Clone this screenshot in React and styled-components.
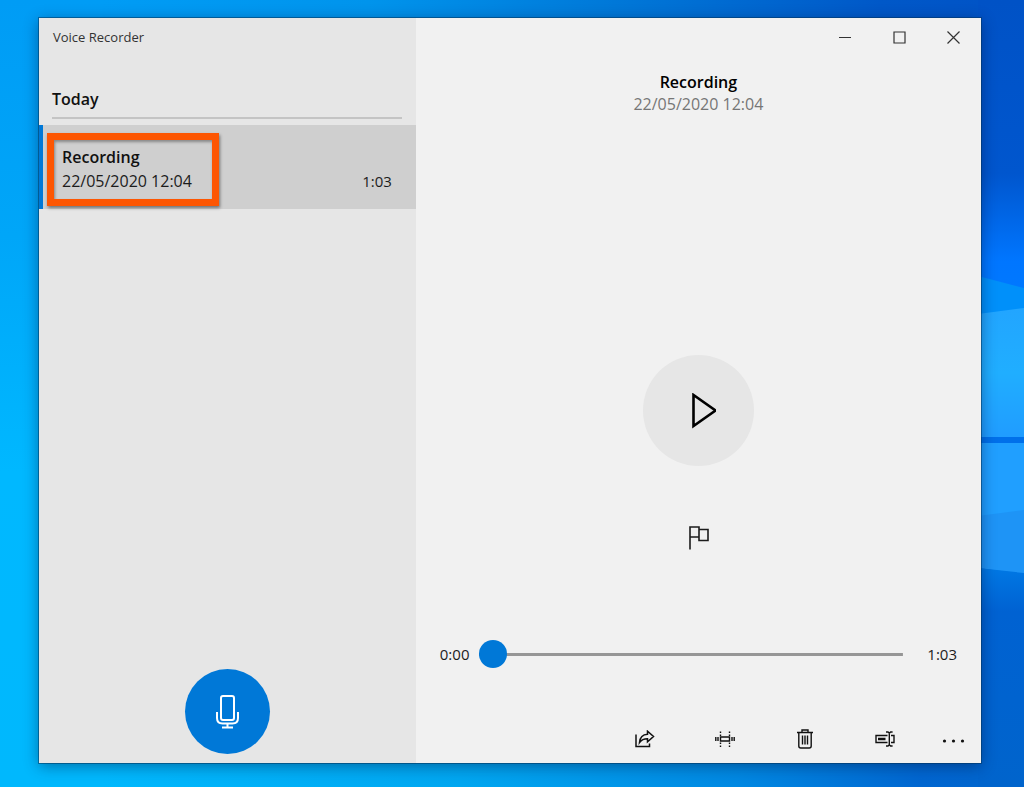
import React, { useState } from "react";
import styled, { createGlobalStyle } from "styled-components";

const GlobalStyle = createGlobalStyle`
  * { box-sizing: border-box; }
  body {
    margin: 0;
    font-family: "Open Sans", "Noto Sans", sans-serif;
    font-size: 16px;
    line-height: 24px;
    color: #1c1c1c;
  }
  button {
    font: inherit;
    color: inherit;
    background: none;
    border: 0;
    padding: 0;
    cursor: pointer;
  }
  h1, h2, p, ul { margin: 0; padding: 0; }
`;

const Desktop = styled.div`
  position: relative;
  display: flex;
  min-height: 100vh;
  padding: 18px 43px 24px 39px;
  overflow: hidden;
  background:
    linear-gradient(180deg, #009cf5 0%, #00a6f8 30%, #00b8ff 60%, #00b8fd 100%) left / 10% 100% no-repeat,
    linear-gradient(90deg, #009cf5 10%, #0094ec 36%, #0078d8 60%, #0058c8 86%, #0052c6 100%) top / 100% 50% no-repeat,
    linear-gradient(90deg, #00b8fd 10%, #00a6f0 45%, #0088e2 72%, #0066d0 90%, #0064cc 100%);
`;

const Wallpaper = styled.svg`
  position: absolute;
  top: 0;
  right: 0;
  width: 64px;
  height: 100%;
`;

const Window = styled.main`
  position: relative;
  flex: 1;
  display: grid;
  grid-template-columns: 2fr 3fr;
  box-shadow: 0 0 0 1px rgba(0, 50, 90, 0.5), 0 3px 14px rgba(0, 20, 60, 0.45);
`;

const Sidebar = styled.aside`
  display: flex;
  flex-direction: column;
  background: #e6e6e6;
`;

const AppTitle = styled.h1`
  padding-left: 14px;
  font-size: 13px;
  font-weight: 400;
  line-height: 39px;
  color: #333;
`;

const GroupTitle = styled.h2`
  margin: 30px 14px 6px 13px;
  padding-bottom: 6px;
  border-bottom: 2px solid #c4c4c4;
  font-size: 16px;
  font-weight: 600;
  color: #111;
`;

const List = styled.ul`
  flex: 1;
  list-style: none;
`;

const Item = styled.button`
  position: relative;
  display: flex;
  align-items: last baseline;
  justify-content: space-between;
  width: 100%;
  padding: 20px 24px 16px 23px;
  background: #cfcfcf;
  box-shadow: inset 4px 0 0 #0078d7;
  text-align: left;
`;

const Highlight = styled.span`
  position: absolute;
  inset: 8px auto 3px 8px;
  width: 172px;
  border: 7px solid #fd5602;
  box-shadow: 1px 2px 3px rgba(0, 0, 0, 0.45), inset 1px 2px 3px rgba(0, 0, 0, 0.35);
`;

const Name = styled.strong`
  display: block;
  font-weight: 600;
  color: #111;
`;

const Time = styled.span`
  font-size: 15px;
`;

const RecordButton = styled.button`
  display: grid;
  place-items: center;
  align-self: center;
  width: 85px;
  height: 85px;
  margin-bottom: 9px;
  border-radius: 50%;
  background: #0078d7;
  color: #fff;
`;

const Player = styled.section`
  display: flex;
  flex-direction: column;
  background: #f1f1f1;
`;

const WindowControls = styled.div`
  display: flex;
  justify-content: flex-end;
`;

const ControlButton = styled.button`
  display: grid;
  place-items: center;
  width: 54px;
  height: 39px;
  color: #333;
`;

const Details = styled.header`
  padding-top: 14px;
  line-height: 22px;
  text-align: center;
`;

const Title = styled.h2`
  font-size: 16px;
  font-weight: 600;
  color: #000;
`;

const When = styled.p`
  color: #767676;
`;

const Stage = styled.div`
  flex: 1;
  display: flex;
  flex-direction: column;
  align-items: center;
  justify-content: flex-end;
  gap: 48px;
  padding-bottom: 76px;
`;

const PlayButton = styled.button`
  display: grid;
  place-items: center;
  width: 111px;
  height: 111px;
  border-radius: 50%;
  background: #e6e6e6;
  color: #000;
`;

const MarkerButton = styled.button`
  display: grid;
  place-items: center;
  width: 48px;
  height: 48px;
`;

const Timeline = styled.div`
  display: flex;
  align-items: center;
  padding: 0 24px;
  margin-bottom: 45px;
`;

const Seek = styled.input`
  appearance: none;
  flex: 1;
  min-width: 0;
  height: 32px;
  margin: 0 24px 0 10px;
  background: linear-gradient(#969696, #969696) center / 100% 3px no-repeat;

  &::-webkit-slider-thumb {
    appearance: none;
    width: 28px;
    height: 28px;
    border-radius: 50%;
    background: #0078d7;
  }
`;

const Toolbar = styled.div`
  display: flex;
  justify-content: flex-end;
`;

const ToolButton = styled.button`
  display: grid;
  place-items: center;
  width: ${(p) => (p.$narrow ? 56 : 80)}px;
  height: 48px;
  color: #111;
`;

const Icon = ({ w, h, stroke = 1, children }) => (
  <svg width={w} height={h} viewBox={`0 0 ${w} ${h}`} fill="none" stroke="currentColor" strokeWidth={stroke} aria-hidden="true">
    {children}
  </svg>
);

const MinimizeIcon = () => <Icon w={13} h={13}><path d="M0 6.5h12" /></Icon>;
const MaximizeIcon = () => <Icon w={13} h={13} stroke={1.2}><path d="M1 1h11v11H1z" /></Icon>;
const CloseIcon = () => <Icon w={13} h={13} stroke={1.2}><path d="M.5.5l12 12M12.5.5l-12 12" /></Icon>;

const MicIcon = () => (
  <Icon w={25} h={34} stroke={2}>
    <rect x="6" y="1" width="13" height="24" rx="2" />
    <path d="M2 17v6q0 5.500 5.500 5.500h10q5.500 0 5.500-5.500v-6M12.500 28.500v4M7 32.500h11" />
  </Icon>
);

const PlayIcon = () => (
  <Icon w={36} h={36} stroke={2.6}>
    <path d="M13.500 2v31l22-15.500z" />
  </Icon>
);

const FlagIcon = () => (
  <Icon w={24} h={24} stroke={1.6}>
    <path d="M4 23.500V1h9v10H4M13 3.500h9v11h-9v-3.500" />
  </Icon>
);

const ShareIcon = () => (
  <Icon w={20} h={18} stroke={1.5}>
    <path d="M1 4.500v12h13.500v-3" />
    <path d="M4.500 12.500C5 7.500 8 4.500 12.500 4.300V1.200l6 5.300-6 5.300V8.700c-3.500 0-6 1-8 3.800z" />
  </Icon>
);

const TrimIcon = () => (
  <Icon w={20} h={18} stroke={1.4}>
    <path d="M5.500 7h9v4h-9z" />
    <path d="M.8 7v4M3 7v4M17 7v4M19.200 7v4" />
    <path d="M5.500 1.500v5.500M5.500 12.500v5M14.500 1.500v5.500M14.500 12.500v5" strokeDasharray="1.500 1.500" />
  </Icon>
);

const TrashIcon = () => (
  <Icon w={16} h={20} stroke={1.4}>
    <path d="M0 3.500h16M5 3.500V1h6v2.500M1.800 3.500v13.500q0 2 2 2h8.400q2 0 2-2V3.500" />
    <path d="M5.500 6.500v9M8 6.500v9M10.500 6.500v9" />
  </Icon>
);

const RenameIcon = () => (
  <Icon w={20} h={16} stroke={1.4}>
    <path d="M12.500 4.500H1v7h11.500M16 4.500h3v7h-3" />
    <path d="M3 8h7.500" strokeWidth="2.500" />
    <path d="M11 1h2l1.300 1.300L15.600 1h2M14.300 2v12M11 15h2l1.300-1.300L15.600 15h2" />
  </Icon>
);

const MoreIcon = () => (
  <Icon w={24} h={8}>
    <g fill="currentColor" stroke="none">
      <circle cx="3.500" cy="6" r="1.600" />
      <circle cx="12.500" cy="6" r="1.600" />
      <circle cx="21.500" cy="6" r="1.600" />
    </g>
  </Icon>
);

const controls = [
  ["Minimize", MinimizeIcon],
  ["Maximize", MaximizeIcon],
  ["Close", CloseIcon],
];

const tools = [
  ["Share", ShareIcon],
  ["Trim", TrimIcon],
  ["Delete", TrashIcon],
  ["Rename", RenameIcon],
  ["See more", MoreIcon],
];

export default function App() {
  const [position, setPosition] = useState(0);
  const time = `${Math.floor(position / 60)}:${String(position % 60).padStart(2, "0")}`;

  return (
    <>
      <GlobalStyle />
      <Desktop>
        <Wallpaper viewBox="0 0 64 787" preserveAspectRatio="none" aria-hidden="true">
          <defs>
            <linearGradient id="glow" x1="0" y1="0" x2="0" y2="1">
              <stop offset="0" stopColor="#0052c6" />
              <stop offset="0.6" stopColor="#0056ce" />
              <stop offset="0.9" stopColor="#0076ff" />
              <stop offset="1" stopColor="#0078ff" />
            </linearGradient>
            <linearGradient id="pane" x1="0" y1="0" x2="0" y2="1">
              <stop offset="0" stopColor="#22a5ff" />
              <stop offset="0.5" stopColor="#20aeff" />
              <stop offset="1" stopColor="#209cff" />
            </linearGradient>
            <linearGradient id="floor" x1="0" y1="0" x2="0" y2="1">
              <stop offset="0" stopColor="#0078e4" />
              <stop offset="0.2" stopColor="#0062d2" />
              <stop offset="1" stopColor="#0064cc" />
            </linearGradient>
          </defs>
          <path d="M18 0h46v290H18z" fill="url(#glow)" />
          <path d="M18 276l46 12v32H18z" fill="#0090fa" />
          <path d="M18 314l46-6v130H18z" fill="url(#pane)" />
          <path d="M18 437h46v7H18z" fill="#0070ea" />
          <path d="M18 443h46v68l-46 6z" fill="#209fff" />
          <path d="M18 516l46-6v64l-46-6z" fill="#1e94f6" />
          <path d="M18 568l46 5v214H18z" fill="url(#floor)" />
        </Wallpaper>
        <Window>
          <Sidebar>
            <AppTitle>Voice Recorder</AppTitle>
            <GroupTitle>Today</GroupTitle>
            <List>
              <li>
                <Item type="button" aria-current="true">
                  <span>
                    <Name>Recording</Name>
                    22/05/2020 12:04
                  </span>
                  <Time>1:03</Time>
                  <Highlight />
                </Item>
              </li>
            </List>
            <RecordButton type="button" aria-label="Record"><MicIcon /></RecordButton>
          </Sidebar>
          <Player>
            <WindowControls>
              {controls.map(([label, Glyph]) => (
                <ControlButton key={label} type="button" aria-label={label}><Glyph /></ControlButton>
              ))}
            </WindowControls>
            <Details>
              <Title>Recording</Title>
              <When>22/05/2020 12:04</When>
            </Details>
            <Stage>
              <PlayButton type="button" aria-label="Play"><PlayIcon /></PlayButton>
              <MarkerButton type="button" aria-label="Add a marker"><FlagIcon /></MarkerButton>
            </Stage>
            <Timeline>
              <Time>{time}</Time>
              <Seek
                type="range"
                aria-label="Playback position"
                min={0}
                max={63}
                value={position}
                onChange={(e) => setPosition(Number(e.target.value))}
              />
              <Time>1:03</Time>
            </Timeline>
            <Toolbar>
              {tools.map(([label, Glyph], i) => (
                <ToolButton key={label} type="button" aria-label={label} $narrow={i === tools.length - 1}>
                  <Glyph />
                </ToolButton>
              ))}
            </Toolbar>
          </Player>
        </Window>
      </Desktop>
    </>
  );
}
